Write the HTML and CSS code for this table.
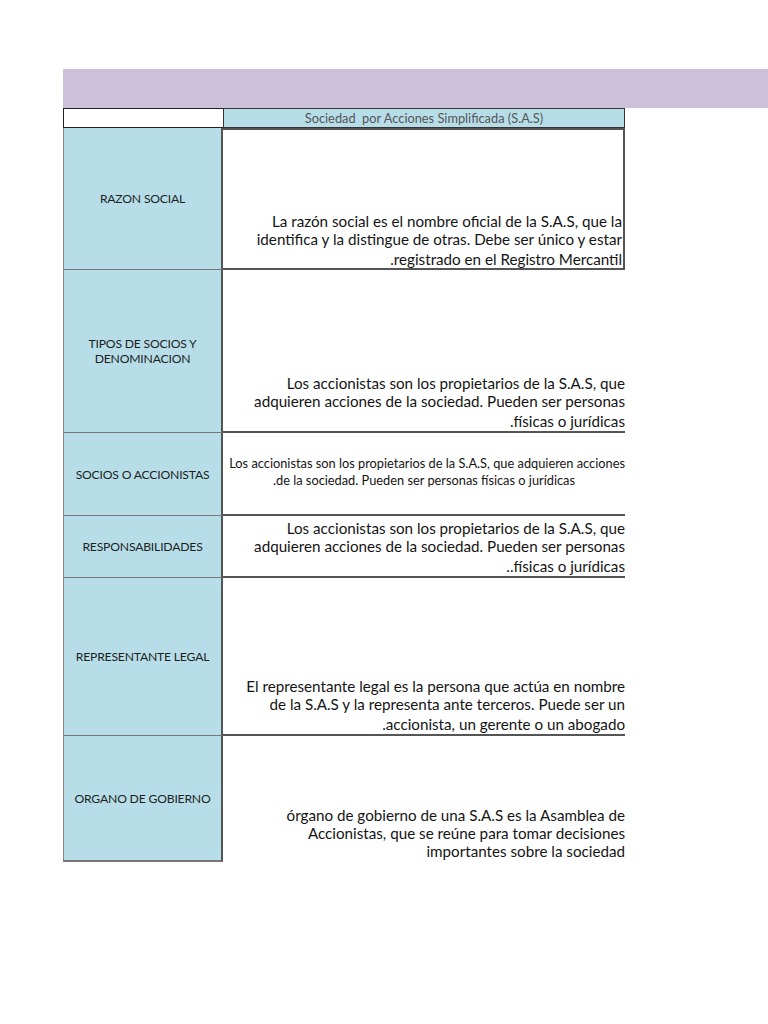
FILE: index.html
```html
<!DOCTYPE html>
<html lang="es">
<head>
<meta charset="utf-8">
<title>S.A.S</title>
<link rel="stylesheet" href="styles.css">
</head>
<body>
<div class="page">
  <div class="band"></div>
  <div class="table">
    <div class="hl"></div>
    <div class="hr">Sociedad&nbsp; por Acciones Simplificada (S.A.S)</div>

    <div class="lab r1">RAZON SOCIAL</div>
    <div class="val r1 boxed">
      <span>La razón social es el nombre oficial de la S.A.S, que la</span>
      <span>identifica y la distingue de otras. Debe ser único y estar</span>
      <span class="last">.registrado en el Registro Mercantil</span>
    </div>

    <div class="lab r2">TIPOS DE SOCIOS Y<br>DENOMINACION</div>
    <div class="val r2 ruled">
      <span>Los accionistas son los propietarios de la S.A.S, que</span>
      <span>adquieren acciones de la sociedad. Pueden ser personas</span>
      <span class="last">.físicas o jurídicas</span>
    </div>

    <div class="lab r3">SOCIOS O ACCIONISTAS</div>
    <div class="val r3 ruled small">
      <span>Los accionistas son los propietarios de la S.A.S, que adquieren acciones</span>
      <span class="ctr">.de la sociedad. Pueden ser personas físicas o jurídicas</span>
    </div>

    <div class="lab r4">RESPONSABILIDADES</div>
    <div class="val r4 ruled">
      <span>Los accionistas son los propietarios de la S.A.S, que</span>
      <span>adquieren acciones de la sociedad. Pueden ser personas</span>
      <span class="last">..físicas o jurídicas</span>
    </div>

    <div class="lab r5">REPRESENTANTE LEGAL</div>
    <div class="val r5 ruled">
      <span>El representante legal es la persona que actúa en nombre</span>
      <span>de la S.A.S y la representa ante terceros. Puede ser un</span>
      <span class="last">.accionista, un gerente o un abogado</span>
    </div>

    <div class="lab r6 end">ORGANO DE GOBIERNO</div>
    <div class="val r6">
      <span>órgano de gobierno de una S.A.S es la Asamblea de</span>
      <span>Accionistas, que se reúne para tomar decisiones</span>
      <span>importantes sobre la sociedad</span>
    </div>
  </div>
</div>
</body>
</html>
```

FILE: styles.css
```css
html, body {
  margin: 0;
  padding: 0;
  background: #ffffff;
}
body {
  font-family: Lato, "Open Sans", sans-serif;
  color: #141414;
}
.page {
  padding-top: 69px;
  padding-left: 63px;
}
.band {
  height: 39px;
  background: #ccc0da;
}
.table {
  display: grid;
  grid-template-columns: 160px 402px;
  grid-template-rows: 20px 142px 163px 83px 62px 158px 126px;
  width: 562px;
}
.table > div {
  box-sizing: border-box;
}
.hl {
  background: #ffffff;
  border: 1px solid #222;
  border-right: none;
}
.hr {
  background: #b7dee8;
  border: 1px solid #333;
  color: #555;
  font-size: 12.8px;
  display: flex;
  align-items: center;
  justify-content: center;
}
.lab {
  background: #b7dee8;
  border-left: 1px solid #888;
  border-bottom: 1px solid #777;
  border-right: 2px solid #555;
  font-size: 12.2px;
  letter-spacing: -0.2px;
  line-height: 15px;
  text-align: center;
  display: flex;
  align-items: center;
  justify-content: center;
  color: #1e1e1e;
}
.lab.end {
  border-bottom: 2px solid #777;
}
.val {
  display: flex;
  flex-direction: column;
  justify-content: flex-end;
  align-items: flex-end;
  text-align: right;
  font-size: 15.2px;
  line-height: 18px;
  padding-bottom: 1px;
}
.val span {
  display: block;
  white-space: nowrap;
}
.val .last {
  margin-top: 2px;
}
.boxed {
  border: 2px solid #555;
  border-left: none;
  padding-right: 1px;
  padding-bottom: 0;
}
.ruled {
  border-bottom: 2px solid #555;
}
.val.r6 {
  padding-bottom: 2px;
}
.small {
  font-size: 12.8px;
  line-height: 17px;
  justify-content: center;
  padding-bottom: 4px;
}
.small .ctr {
  align-self: center;
}
```
